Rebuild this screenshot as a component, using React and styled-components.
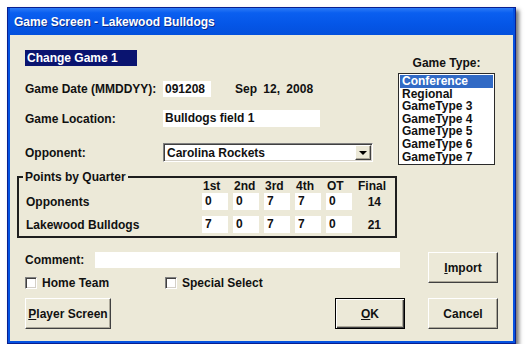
import React from 'react';
import styled, { createGlobalStyle, css } from 'styled-components';

const GlobalStyle = createGlobalStyle`
  html, body {
    margin: 0;
    padding: 0;
    background: #fff;
  }
  body {
    font-family: "Liberation Sans", Arial, sans-serif;
  }
`;

const Window = styled.div`
  box-sizing: border-box;
  width: 509px;
  height: 337px;
  margin: 7px 0 0 7px;
  border: 1px solid #0a1f8f;
  background: #0552e0;
  padding: 0 2px 2px 2px;
  display: flex;
  flex-direction: column;
  box-shadow: 3px 3px 4px rgba(0, 0, 0, 0.55);
`;

const TitleBar = styled.div`
  height: 27px;
  flex: none;
  display: flex;
  align-items: center;
  padding-left: 4px;
  background: linear-gradient(to bottom, #2d7bf6 0%, #0a5ff0 18%, #0556e7 60%, #0450dc 100%);
  color: #fff;
  font: bold 12px "Liberation Sans", Arial, sans-serif;
  text-shadow: 1px 1px 0 #0a2c8c;
`;

const Body = styled.div`
  flex: 1;
  background: #ece9d8;
  padding: 15px 15px 0 7px;
  display: flex;
  flex-direction: column;
  font: bold 12px "Liberation Sans", Arial, sans-serif;
  color: #111;
`;

const Top = styled.div`
  display: grid;
  grid-template-columns: 381px 97px;
  align-items: start;
`;

const LeftCol = styled.div`
  display: flex;
  flex-direction: column;
`;

const Banner = styled.div`
  box-sizing: border-box;
  margin-left: 8px;
  width: 112px;
  height: 16px;
  line-height: 16px;
  padding-left: 2px;
  background: #0a1470;
  color: #fff;
`;

const FieldRow = styled.div`
  display: flex;
  align-items: center;
  margin: ${({ $top }) => $top}px 0 0 8px;
`;

const Label = styled.span`
  flex: none;
  width: ${({ $w }) => $w}px;
`;

const TextBox = styled.div`
  box-sizing: border-box;
  flex: none;
  width: ${({ $w }) => $w}px;
  height: ${({ $h }) => $h}px;
  line-height: ${({ $h }) => $h}px;
  padding-left: 2px;
  background: #fff;
`;

const DateText = styled.span`
  margin-left: 24px;
  word-spacing: 3px;
`;

const Combo = styled.div`
  box-sizing: border-box;
  width: 210px;
  height: 19px;
  display: flex;
  align-items: center;
  padding: 0 1px 0 2px;
  background: #fff;
  border: 1px solid;
  border-color: #808080 #fff #fff #808080;
  box-shadow: inset 1px 1px #404040, inset -1px -1px #d4d0c8;
`;

const ComboText = styled.span`
  flex: 1;
  padding-left: 1px;
`;

const DropButton = styled.div`
  box-sizing: border-box;
  width: 16px;
  height: 15px;
  display: flex;
  align-items: center;
  justify-content: center;
  background: #ece9d8;
  border: 1px solid;
  border-color: #fff #404040 #404040 #fff;
  box-shadow: inset -1px -1px #aca899;
`;

const Arrow = styled.span`
  width: 0;
  height: 0;
  border-left: 4px solid transparent;
  border-right: 4px solid transparent;
  border-top: 4px solid #000;
`;

const TypeCol = styled.div`
  display: flex;
  flex-direction: column;
  align-items: center;
  padding-top: 6px;
`;

const TypeLabel = styled.div`
  height: 14px;
  line-height: 14px;
  margin-bottom: 3px;
`;

const ListBox = styled.div`
  box-sizing: border-box;
  width: 97px;
  padding: 1px;
  background: #fff;
  border: 1px solid #2a2a2a;
`;

const ListItem = styled.div`
  height: 12.6px;
  line-height: 12.6px;
  padding-left: 2px;
  ${({ $selected }) =>
    $selected &&
    css`
      background: #316ac5;
      color: #fff;
    `}
`;

const Group = styled.div`
  position: relative;
  box-sizing: border-box;
  width: 380px;
  margin-top: 11px;
  padding: 0 0 3px 7px;
  border: 2px solid #1e1e1e;
`;

const GroupTitle = styled.span`
  position: absolute;
  top: -8px;
  left: 4px;
  padding: 0 2px;
  line-height: 14px;
  background: #ece9d8;
`;

const QRow = styled.div`
  display: grid;
  grid-template-columns: 171px repeat(5, 26px) 28px;
  column-gap: 5px;
  align-items: center;
  height: ${({ $h }) => $h}px;
  margin-top: ${({ $top }) => $top || 0}px;
`;

const QHead = styled.span`
  padding-left: 1px;
`;

const QCell = styled.div`
  height: 17px;
  line-height: 17px;
  padding-left: 3px;
  background: #fff;
`;

const QFinal = styled.span`
  text-align: right;
  padding-right: 4px;
`;

const Bottom = styled.div`
  display: flex;
  margin-top: 14px;
`;

const BottomLeft = styled.div`
  box-sizing: border-box;
  width: 388px;
  padding-left: 8px;
  display: flex;
  flex-direction: column;
`;

const BottomRight = styled.div`
  margin-left: auto;
  width: 70px;
  display: flex;
  flex-direction: column;
  justify-content: space-between;
`;

const CommentRow = styled.div`
  display: flex;
  align-items: center;
  height: 16px;
`;

const CheckRow = styled.div`
  display: flex;
  align-items: center;
  height: 12px;
  margin-top: 9px;
`;

const CheckItem = styled.label`
  display: flex;
  align-items: center;
  gap: 5px;
  width: ${({ $w }) => ($w ? `${$w}px` : 'auto')};
`;

const CheckBox = styled.span`
  box-sizing: border-box;
  width: 12px;
  height: 12px;
  background: #fff;
  border: 1px solid;
  border-color: #808080 #fff #fff #808080;
  box-shadow: inset 1px 1px #404040, inset -1px -1px #d4d0c8;
`;

const ButtonRow = styled.div`
  display: flex;
  justify-content: space-between;
  margin-top: 9px;
`;

const Button = styled.button`
  box-sizing: border-box;
  width: ${({ $w }) => $w}px;
  height: ${({ $h }) => $h || 31}px;
  padding: 0;
  background: #ece9d8;
  color: #111;
  font: bold 12px "Liberation Sans", Arial, sans-serif;
  border: 1px solid;
  border-color: #fff #404040 #404040 #fff;
  box-shadow: inset -1px -1px #aca899;
  ${({ $default }) =>
    $default &&
    css`
      border-color: #000;
      box-shadow: inset 1px 1px #fff, inset -1px -1px #404040, inset -2px -2px #aca899;
    `}
`;

const gameTypes = ['Conference', 'Regional', 'GameType 3', 'GameType 4', 'GameType 5', 'GameType 6', 'GameType 7'];

const scores = [
  { team: 'Opponents', q: [0, 0, 7, 7, 0], final: 14 },
  { team: 'Lakewood Bulldogs', q: [7, 0, 7, 7, 0], final: 21 },
];

export default function App() {
  return (
    <>
      <GlobalStyle />
      <Window>
        <TitleBar>Game Screen - Lakewood Bulldogs</TitleBar>
        <Body>
          <Top>
            <LeftCol>
              <Banner>Change Game 1</Banner>
              <FieldRow $top={15}>
                <Label $w={138}>Game Date (MMDDYY):</Label>
                <TextBox $w={48} $h={16}>091208</TextBox>
                <DateText>Sep 12, 2008</DateText>
              </FieldRow>
              <FieldRow $top={13}>
                <Label $w={138}>Game Location:</Label>
                <TextBox $w={157} $h={17}>Bulldogs field 1</TextBox>
              </FieldRow>
              <FieldRow $top={16}>
                <Label $w={138}>Opponent:</Label>
                <Combo>
                  <ComboText>Carolina Rockets</ComboText>
                  <DropButton>
                    <Arrow />
                  </DropButton>
                </Combo>
              </FieldRow>
            </LeftCol>
            <TypeCol>
              <TypeLabel>Game Type:</TypeLabel>
              <ListBox>
                {gameTypes.map((t, i) => (
                  <ListItem key={t} $selected={i === 0}>
                    {t}
                  </ListItem>
                ))}
              </ListBox>
            </TypeCol>
          </Top>

          <Group>
            <GroupTitle>Points by Quarter</GroupTitle>
            <QRow $h={15}>
              <span />
              <QHead>1st</QHead>
              <QHead>2nd</QHead>
              <QHead>3rd</QHead>
              <QHead>4th</QHead>
              <QHead>OT</QHead>
              <QHead>Final</QHead>
            </QRow>
            {scores.map((s, r) => (
              <QRow key={s.team} $h={17} $top={r ? 6 : 0}>
                <span>{s.team}</span>
                {s.q.map((v, i) => (
                  <QCell key={i}>{v}</QCell>
                ))}
                <QFinal>{s.final}</QFinal>
              </QRow>
            ))}
          </Group>

          <Bottom>
            <BottomLeft>
              <CommentRow>
                <Label $w={70}>Comment:</Label>
                <TextBox $w={305} $h={16} />
              </CommentRow>
              <CheckRow>
                <CheckItem $w={140}>
                  <CheckBox />
                  Home Team
                </CheckItem>
                <CheckItem>
                  <CheckBox />
                  Special Select
                </CheckItem>
              </CheckRow>
              <ButtonRow>
                <Button $w={86}>
                  <u>P</u>layer Screen
                </Button>
                <Button $w={70} $default>
                  <u>O</u>K
                </Button>
              </ButtonRow>
            </BottomLeft>
            <BottomRight>
              <Button $w={70}>
                <u>I</u>mport
              </Button>
              <Button $w={70}>Cancel</Button>
            </BottomRight>
          </Bottom>
        </Body>
      </Window>
    </>
  );
}
